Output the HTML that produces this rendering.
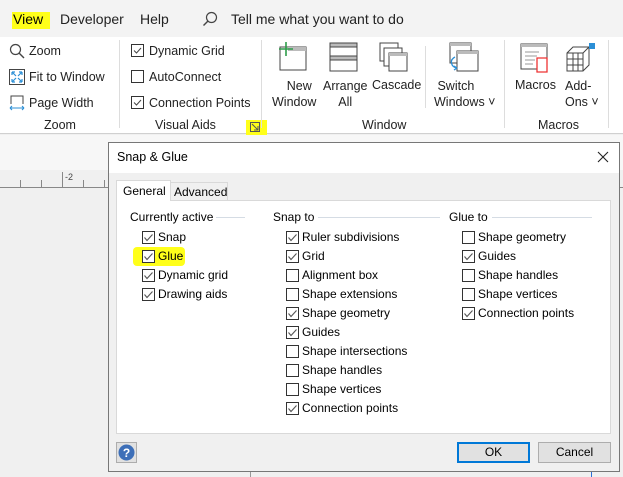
<!DOCTYPE html><html><head><style>
*{margin:0;padding:0;box-sizing:border-box}
body{width:623px;height:477px;overflow:hidden;position:relative;background:#f0f0f0;font-family:"Liberation Sans",sans-serif;font-size:12px;color:#000}
.a{position:absolute;white-space:nowrap}
.rb{font-size:12.5px;color:#222}
.cb{position:absolute;width:13px;height:13px;border:1px solid #333;background:#fff}
.cb svg{position:absolute;left:0;top:0}
.lb{position:absolute;font-size:12px;white-space:nowrap}
.gl{position:absolute;height:1px;background:#d5dce4}
</style></head><body>
<div class="a" style="left:0;top:0;width:623px;height:37px;background:#f3f3f3"></div>
<div class="a" style="left:12px;top:12px;width:38px;height:17px;background:#ffff1a"></div>
<div class="a" style="left:13px;top:11px;font-size:14px">View</div>
<div class="a" style="left:60px;top:11px;font-size:14px;color:#222">Developer</div>
<div class="a" style="left:140px;top:11px;font-size:14px;color:#222">Help</div>
<svg class="a" style="left:202px;top:11px" width="16" height="16"><circle cx="9.5" cy="6.5" r="5" fill="none" stroke="#444" stroke-width="1.2"/><line x1="6" y1="10" x2="1.5" y2="14.5" stroke="#444" stroke-width="1.4"/></svg>
<div class="a" style="left:231px;top:11px;font-size:14px;color:#222">Tell me what you want to do</div>
<div class="a" style="left:0;top:37px;width:623px;height:97px;background:#fff;border-bottom:1px solid #d0d0d0"></div>
<svg class="a" style="left:9px;top:43px" width="16" height="16"><circle cx="6.5" cy="6.5" r="5" fill="none" stroke="#444" stroke-width="1.2"/><line x1="10" y1="10" x2="15" y2="15" stroke="#444" stroke-width="1.4"/></svg>
<div class="a rb" style="left:29px;top:44px">Zoom</div>
<svg class="a" style="left:9px;top:69px" width="16" height="16"><rect x="0.5" y="0.5" width="15" height="15" fill="none" stroke="#444"/><path d="M3 3l4 4M13 3l-4 4M3 13l4-4M13 13l-4-4M3 3h3M3 3v3M13 3h-3M13 3v3M3 13h3M3 13v-3M13 13h-3M13 13v-3" stroke="#2b8fd6" stroke-width="1.2" fill="none"/></svg>
<div class="a rb" style="left:29px;top:70px">Fit to Window</div>
<svg class="a" style="left:9px;top:95px" width="16" height="16"><path d="M2 9V1h12v8" fill="none" stroke="#444"/><path d="M1 13h14M1 13l2-2M1 13l2 2M15 13l-2-2M15 13l-2 2" stroke="#2b8fd6" stroke-width="1.1" fill="none"/></svg>
<div class="a rb" style="left:29px;top:96px">Page Width</div>
<div class="a rb" style="left:44px;top:118px">Zoom</div>
<div class="a" style="left:119px;top:40px;width:1px;height:88px;background:#ddd"></div>
<div class="cb" style="left:131px;top:44px"><svg width="11" height="11"><path d="M2 5.5l2.5 2.5 4.5-5" stroke="#444" fill="none"/></svg></div>
<div class="a rb" style="left:149px;top:44px">Dynamic Grid</div>
<div class="cb" style="left:131px;top:70px"></div>
<div class="a rb" style="left:149px;top:70px">AutoConnect</div>
<div class="cb" style="left:131px;top:96px"><svg width="11" height="11"><path d="M2 5.5l2.5 2.5 4.5-5" stroke="#444" fill="none"/></svg></div>
<div class="a rb" style="left:149px;top:96px">Connection Points</div>
<div class="a rb" style="left:155px;top:118px">Visual Aids</div>
<div class="a" style="left:246px;top:120px;width:21px;height:15px;background:#ffff1a"></div>
<svg class="a" style="left:250px;top:122px" width="10" height="10"><rect x="0.5" y="0.5" width="9" height="9" fill="none" stroke="#555"/><path d="M2 2l6 6M8 4v4H4" stroke="#555" fill="none"/></svg>
<div class="a" style="left:261px;top:40px;width:1px;height:88px;background:#ddd"></div>
<svg class="a" style="left:278px;top:42px" width="30" height="30"><rect x="2" y="5" width="26" height="23" fill="#fff" stroke="#444"/><rect x="10" y="5" width="18" height="4" fill="#bbb"/><path d="M8 0v14M1 7h14" stroke="#2e9c4a" stroke-width="1.6"/></svg>
<div class="a rb" style="left:282px;top:78px;text-align:center;line-height:16px">New<br><span style="margin-left:-10px">Window</span></div>
<svg class="a" style="left:329px;top:42px" width="30" height="30"><rect x="1" y="1" width="27" height="28" fill="#fff" stroke="#444"/><rect x="1" y="1" width="27" height="4" fill="#bbb" stroke="#444"/><rect x="1" y="14" width="27" height="4" fill="#bbb" stroke="#444"/></svg>
<div class="a rb" style="left:323px;top:78px;text-align:center;line-height:16px">Arrange<br>All</div>
<svg class="a" style="left:379px;top:42px" width="30" height="30"><rect x="1" y="1" width="18" height="18" fill="#fff" stroke="#444"/><rect x="5" y="6" width="18" height="18" fill="#fff" stroke="#444"/><rect x="10" y="11" width="18" height="18" fill="#fff" stroke="#444"/><rect x="10" y="11" width="18" height="3" fill="#bbb"/></svg>
<div class="a rb" style="left:372px;top:78px">Cascade</div>
<div class="a" style="left:425px;top:46px;width:1px;height:62px;background:#ddd"></div>
<svg class="a" style="left:447px;top:42px" width="32" height="32"><rect x="3" y="1" width="21" height="20" fill="#fff" stroke="#444"/><rect x="3" y="1" width="21" height="3" fill="#bbb"/><rect x="10" y="9" width="21" height="20" fill="#fff" stroke="#444"/><rect x="10" y="9" width="21" height="3" fill="#bbb"/><path d="M8 15c-6 3-4 10 2 11M10 26l-3-2M10 26l-3 2" stroke="#2b8fd6" fill="none" stroke-width="1.3"/></svg>
<div class="a rb" style="left:434px;top:78px;line-height:16px">&nbsp;Switch<br>Windows ˅</div>
<div class="a rb" style="left:362px;top:118px">Window</div>
<div class="a" style="left:504px;top:40px;width:1px;height:88px;background:#ddd"></div>
<svg class="a" style="left:520px;top:43px" width="32" height="32"><rect x="1" y="1" width="26" height="25" fill="#fff" stroke="#444"/><rect x="1" y="1" width="26" height="3" fill="#bbb"/><path d="M5 9h14M5 13h12M5 17h10M5 21h8" stroke="#999"/><path d="M17 15h10v14h-10z" fill="#fff" stroke="#e33" stroke-width="1.3"/></svg>
<div class="a rb" style="left:515px;top:78px">Macros</div>
<svg class="a" style="left:565px;top:43px" width="32" height="32"><path d="M2 10l6-6h16v18l-6 6H2z" fill="#fff" stroke="#444"/><path d="M2 10h16v18M18 10l6-6M2 16h16M2 22h16M8 10v18M13 10v18" stroke="#444" fill="none"/><rect x="24" y="0" width="6" height="6" fill="#2b8fd6"/></svg>
<div class="a rb" style="left:565px;top:78px;line-height:16px">Add-<br>Ons ˅</div>
<div class="a rb" style="left:538px;top:118px">Macros</div>
<div class="a" style="left:608px;top:40px;width:1px;height:88px;background:#ddd"></div>
<div class="a" style="left:0;top:135px;width:623px;height:35px;background:#f7f7f7"></div>
<div class="a" style="left:0;top:170px;width:623px;height:18px;background:#f0f0f0;border-bottom:1px solid #888"></div>
<div class="a" style="left:20px;top:180px;width:1px;height:8px;background:#888"></div>
<div class="a" style="left:41px;top:180px;width:1px;height:8px;background:#888"></div>
<div class="a" style="left:62px;top:172px;width:1px;height:16px;background:#888"></div>
<div class="a" style="left:65px;top:172px;font-size:9px;color:#444">-2</div>
<div class="a" style="left:83px;top:180px;width:1px;height:8px;background:#888"></div>
<div class="a" style="left:104px;top:180px;width:1px;height:8px;background:#888"></div>
<div class="a" style="left:108px;top:142px;width:512px;height:330px;background:#f0f0f0;border:1px solid #777"></div>
<div class="a" style="left:109px;top:143px;width:510px;height:30px;background:#fff"></div>
<div class="a" style="left:117px;top:150px;font-size:12.5px">Snap &amp; Glue</div>
<svg class="a" style="left:597px;top:151px" width="12" height="12"><path d="M1 1l10 10M11 1L1 11" stroke="#222" stroke-width="1.1"/></svg>
<div class="a" style="left:116px;top:200px;width:495px;height:234px;background:#fff;border:1px solid #d9d9d9"></div>
<div class="a" style="left:170px;top:182px;width:58px;height:19px;background:#f0f0f0;border:1px solid #d9d9d9"></div>
<div class="a" style="left:174px;top:185px">Advanced</div>
<div class="a" style="left:116px;top:180px;width:55px;height:21px;background:#fff;border:1px solid #d9d9d9;border-bottom:none"></div>
<div class="a" style="left:123px;top:184px">General</div>
<div class="a" style="left:130px;top:210px">Currently active</div>
<div class="gl" style="left:216px;top:217px;width:29px"></div>
<div class="a" style="left:273px;top:210px">Snap to</div>
<div class="gl" style="left:318px;top:217px;width:122px"></div>
<div class="a" style="left:449px;top:210px">Glue to</div>
<div class="gl" style="left:492px;top:217px;width:100px"></div>
<div class="a" style="left:133px;top:247px;width:52px;height:19px;background:#ffff1a;border-radius:4px"></div>
<div id="c"></div>
<div class="a" style="left:116px;top:442px;width:21px;height:21px;background:#e1e1e1;border:1px solid #adadad"></div>
<svg class="a" style="left:118px;top:444px" width="17" height="17"><circle cx="8.5" cy="8.5" r="8" fill="#3d6fb8"/><text x="8.5" y="13" font-size="12" font-weight="bold" fill="#fff" text-anchor="middle" font-family="Liberation Sans">?</text></svg>
<div class="a" style="left:457px;top:442px;width:73px;height:21px;background:#e1e1e1;border:2px solid #0078d7;text-align:center;line-height:17px">OK</div>
<div class="a" style="left:538px;top:442px;width:73px;height:21px;background:#e1e1e1;border:1px solid #adadad;text-align:center;line-height:19px">Cancel</div>
<div class="a" style="left:250px;top:472px;width:1px;height:5px;background:#999"></div>
<div class="a" style="left:591px;top:472px;width:1px;height:5px;background:#2b6fd6"></div>
<script>
var cols=[[142,[["Snap",1],["Glue",1],["Dynamic grid",1],["Drawing aids",1]]],
[286,[["Ruler subdivisions",1],["Grid",1],["Alignment box",0],["Shape extensions",0],["Shape geometry",1],["Guides",1],["Shape intersections",0],["Shape handles",0],["Shape vertices",0],["Connection points",1]]],
[462,[["Shape geometry",0],["Guides",1],["Shape handles",0],["Shape vertices",0],["Connection points",1]]]];
var h="";
cols.forEach(function(c){c[1].forEach(function(it,i){var y=231+i*19;
h+='<div class="cb" style="left:'+c[0]+'px;top:'+y+'px">'+(it[1]?'<svg width="11" height="11"><path d="M1.5 5.5l2.5 3 5.5-6" stroke="#555" fill="none" stroke-width="1.1"/></svg>':'')+'</div>';
h+='<div class="lb" style="left:'+(c[0]+16)+'px;top:'+(y-1)+'px">'+it[0]+'</div>';});});
document.getElementById("c").innerHTML=h;
</script>
</body></html>
